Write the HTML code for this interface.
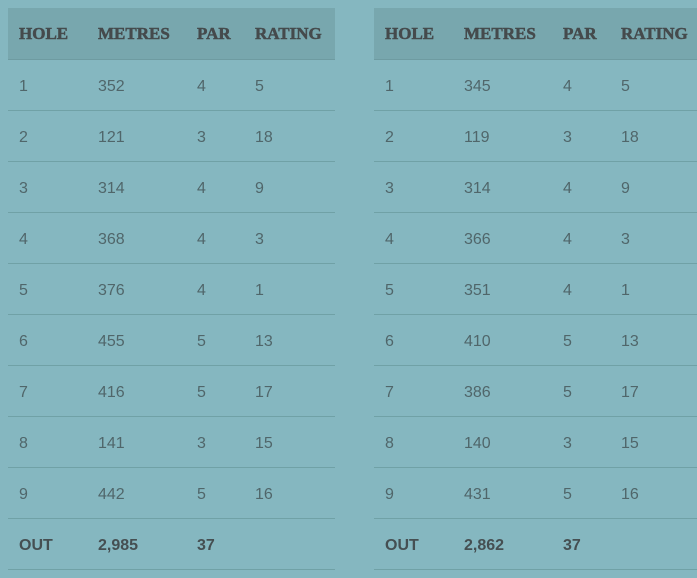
<!DOCTYPE html>
<html><head><style>
html,body{margin:0;padding:0;}
body{width:697px;height:578px;background:#85b7c0;position:relative;overflow:hidden;font-family:"Liberation Sans",sans-serif;}
.t{position:absolute;top:8px;width:327px;}
.h{height:51px;background:#78a7ae;border-bottom:1px solid #6e9ba1;position:relative;}
.h span{position:absolute;top:16px;font-family:"Liberation Serif",serif;font-weight:bold;font-size:17px;color:#454a4c;-webkit-text-stroke:0.5px #454a4c;}
.r{height:50px;border-bottom:1px solid #70a1a6;position:relative;}
.r span{position:absolute;top:18px;font-size:16px;color:#50666a;}
.r.o span{font-weight:bold;color:#454f52;}
.c1{left:11px}.c2{left:90px}.c3{left:189px}.c4{left:247px}
</style></head><body>
<div class="t" style="left:8px">
<div class="h"><span class="c1">HOLE</span><span class="c2">METRES</span><span class="c3">PAR</span><span class="c4">RATING</span></div>
<div class="r"><span class="c1">1</span><span class="c2">352</span><span class="c3">4</span><span class="c4">5</span></div>
<div class="r"><span class="c1">2</span><span class="c2">121</span><span class="c3">3</span><span class="c4">18</span></div>
<div class="r"><span class="c1">3</span><span class="c2">314</span><span class="c3">4</span><span class="c4">9</span></div>
<div class="r"><span class="c1">4</span><span class="c2">368</span><span class="c3">4</span><span class="c4">3</span></div>
<div class="r"><span class="c1">5</span><span class="c2">376</span><span class="c3">4</span><span class="c4">1</span></div>
<div class="r"><span class="c1">6</span><span class="c2">455</span><span class="c3">5</span><span class="c4">13</span></div>
<div class="r"><span class="c1">7</span><span class="c2">416</span><span class="c3">5</span><span class="c4">17</span></div>
<div class="r"><span class="c1">8</span><span class="c2">141</span><span class="c3">3</span><span class="c4">15</span></div>
<div class="r"><span class="c1">9</span><span class="c2">442</span><span class="c3">5</span><span class="c4">16</span></div>
<div class="r o"><span class="c1">OUT</span><span class="c2">2,985</span><span class="c3">37</span></div>
</div>
<div class="t" style="left:374px">
<div class="h"><span class="c1">HOLE</span><span class="c2">METRES</span><span class="c3">PAR</span><span class="c4">RATING</span></div>
<div class="r"><span class="c1">1</span><span class="c2">345</span><span class="c3">4</span><span class="c4">5</span></div>
<div class="r"><span class="c1">2</span><span class="c2">119</span><span class="c3">3</span><span class="c4">18</span></div>
<div class="r"><span class="c1">3</span><span class="c2">314</span><span class="c3">4</span><span class="c4">9</span></div>
<div class="r"><span class="c1">4</span><span class="c2">366</span><span class="c3">4</span><span class="c4">3</span></div>
<div class="r"><span class="c1">5</span><span class="c2">351</span><span class="c3">4</span><span class="c4">1</span></div>
<div class="r"><span class="c1">6</span><span class="c2">410</span><span class="c3">5</span><span class="c4">13</span></div>
<div class="r"><span class="c1">7</span><span class="c2">386</span><span class="c3">5</span><span class="c4">17</span></div>
<div class="r"><span class="c1">8</span><span class="c2">140</span><span class="c3">3</span><span class="c4">15</span></div>
<div class="r"><span class="c1">9</span><span class="c2">431</span><span class="c3">5</span><span class="c4">16</span></div>
<div class="r o"><span class="c1">OUT</span><span class="c2">2,862</span><span class="c3">37</span></div>
</div>
</body></html>
